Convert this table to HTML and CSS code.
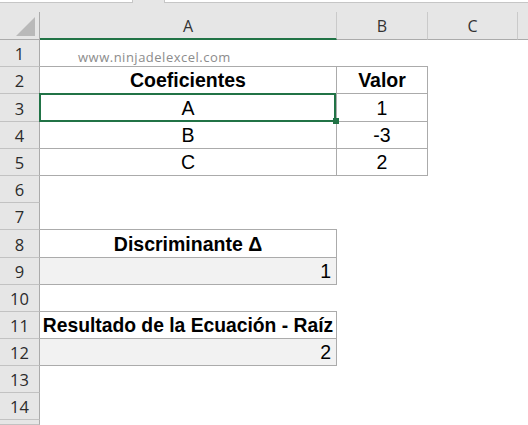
FILE: index.html
```html
<!DOCTYPE html>
<html lang="es">
<head>
<meta charset="utf-8">
<title>Hoja</title>
<link rel="stylesheet" href="styles.css">
</head>
<body>
<div class="topbar">
  <div class="namebox"></div>
  <div class="formulabox"></div>
</div>
<div class="sheet">
  <div class="corner"><svg width="22" height="22" viewBox="0 0 22 22"><polygon points="20,2 20,21 1,21" fill="#b9b9b9"/></svg></div>
  <div class="colhdr selcol">A</div>
  <div class="colhdr">B</div>
  <div class="colhdr">C</div>
  <div class="colhdr last"></div>

  <div class="rowhdr">1</div>
  <div class="cell bb watermark">www.ninjadelexcel.com</div>
  <div class="cell bb"></div>
  <div class="cell"></div>
  <div class="cell"></div>

  <div class="rowhdr">2</div>
  <div class="cell bd bold center">Coeficientes</div>
  <div class="cell bd bold center">Valor</div>
  <div class="cell"></div>
  <div class="cell"></div>

  <div class="rowhdr">3</div>
  <div class="cell bd center selected">A<span class="handle"></span></div>
  <div class="cell bd center">1</div>
  <div class="cell"></div>
  <div class="cell"></div>

  <div class="rowhdr">4</div>
  <div class="cell bd center">B</div>
  <div class="cell bd center">-3</div>
  <div class="cell"></div>
  <div class="cell"></div>

  <div class="rowhdr">5</div>
  <div class="cell bd center">C</div>
  <div class="cell bd center">2</div>
  <div class="cell"></div>
  <div class="cell"></div>

  <div class="rowhdr">6</div>
  <div class="cell"></div>
  <div class="cell"></div>
  <div class="cell"></div>
  <div class="cell"></div>

  <div class="rowhdr">7</div>
  <div class="cell bb"></div>
  <div class="cell"></div>
  <div class="cell"></div>
  <div class="cell"></div>

  <div class="rowhdr">8</div>
  <div class="cell bd bold center">Discriminante Δ</div>
  <div class="cell"></div>
  <div class="cell"></div>
  <div class="cell"></div>

  <div class="rowhdr">9</div>
  <div class="cell bd fill right">1</div>
  <div class="cell"></div>
  <div class="cell"></div>
  <div class="cell"></div>

  <div class="rowhdr">10</div>
  <div class="cell bb"></div>
  <div class="cell"></div>
  <div class="cell"></div>
  <div class="cell"></div>

  <div class="rowhdr">11</div>
  <div class="cell bd bold center tight">Resultado de la Ecuación - Raíz</div>
  <div class="cell"></div>
  <div class="cell"></div>
  <div class="cell"></div>

  <div class="rowhdr">12</div>
  <div class="cell bd fill right">2</div>
  <div class="cell"></div>
  <div class="cell"></div>
  <div class="cell"></div>

  <div class="rowhdr">13</div>
  <div class="cell"></div>
  <div class="cell"></div>
  <div class="cell"></div>
  <div class="cell"></div>

  <div class="rowhdr">14</div>
  <div class="cell"></div>
  <div class="cell"></div>
  <div class="cell"></div>
  <div class="cell"></div>

  <div class="rowhdr"></div>
  <div class="cell"></div>
  <div class="cell"></div>
  <div class="cell"></div>
  <div class="cell"></div>
</div>
</body>
</html>
```

FILE: styles.css
```css
* { box-sizing: border-box; }
html, body {
  margin: 0;
  padding: 0;
  background: #ffffff;
  overflow: hidden;
  width: 528px;
  height: 425px;
}
.topbar {
  height: 12px;
  background: #e6e6e6;
  display: flex;
  gap: 31px;
  align-items: flex-start;
}
.namebox {
  width: 133px;
  height: 3px;
  background: #ffffff;
  border-right: 1px solid #c6c6c6;
  border-bottom: 1px solid #c6c6c6;
}
.formulabox {
  flex: 1;
  height: 3px;
  background: #ffffff;
  border-left: 1px solid #c6c6c6;
  border-bottom: 1px solid #c6c6c6;
}
.sheet {
  display: grid;
  grid-template-columns: 40px 297px 91px 90px 10px;
  grid-template-rows: 28px 27px 27px 28px 27px 27px 27px 27px 28px 27px 27px 27px 27px 27px 27px 5px;
  font-family: "Liberation Sans", Arial, sans-serif;
  font-size: 19.5px;
  color: #000000;
}
.corner {
  background: #e6e6e6;
  border-right: 1px solid #ababab;
  border-bottom: 1px solid #ababab;
  display: flex;
  align-items: flex-end;
  justify-content: flex-end;
  padding: 0 2px 2px 0;
}
.corner svg { display: block; }
.colhdr {
  background: #e6e6e6;
  border-right: 1px solid #cacaca;
  border-bottom: 1px solid #ababab;
  display: flex;
  align-items: center;
  justify-content: center;
  padding-top: 1px;
  font-family: "Open Sans", "Noto Sans", sans-serif;
  font-size: 16px;
  color: #333333;
}
.colhdr.selcol {
  border-bottom: 2px solid #217346;
  padding-top: 2px;
}
.colhdr.last { border-right: none; }
.rowhdr {
  background: #e6e6e6;
  border-right: 1px solid #ababab;
  border-bottom: 1px solid #c2c2c2;
  display: flex;
  align-items: center;
  justify-content: center;
  font-family: "Open Sans", "Noto Sans", sans-serif;
  font-size: 16.5px;
  color: #2b2b2b;
  padding-top: 1px;
}
.cell {
  background: #ffffff;
  display: flex;
  align-items: center;
  white-space: nowrap;
  overflow: visible;
  padding: 1px 4px 0 4px;
}
.bb { border-bottom: 1px solid #ababab; }
.bd {
  border-right: 1px solid #ababab;
  border-bottom: 1px solid #ababab;
}
.bold { font-weight: bold; }
.center { justify-content: center; }
.right { justify-content: flex-end; padding-right: 5px; }
.fill { background: #f2f2f2; }
.tight { padding: 1px 0 0 0; font-size: 19.3px; }
.watermark {
  font-family: "Open Sans", "Noto Sans", sans-serif;
  font-size: 13px;
  letter-spacing: 0.5px;
  color: #8c8c8c;
  align-items: flex-end;
  line-height: 17px;
  padding: 0 0 0 38px;
}
.selected { position: relative; }
.selected::after {
  content: "";
  position: absolute;
  top: -1px;
  left: -1px;
  right: 0;
  bottom: -1px;
  border: 2px solid #217346;
  pointer-events: none;
}
.handle {
  position: absolute;
  right: -3px;
  bottom: -3px;
  width: 6px;
  height: 6px;
  background: #217346;
  z-index: 2;
}
```
